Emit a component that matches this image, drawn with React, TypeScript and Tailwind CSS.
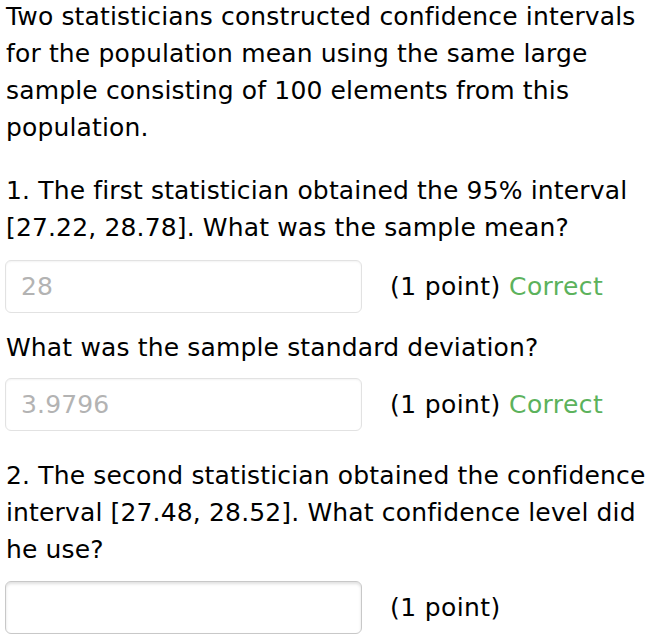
import React from "react";

function Row({ value, correct, dark }: { value?: string; correct?: boolean; dark?: boolean }) {
  return (
    <div className="flex items-center">
      <div
        className={
          "w-[357px] h-[53px] shrink-0 rounded-[6px] border flex items-center pl-[15px] text-[25px] text-[#b3b3b3] bg-white " +
          (dark ? "border-[#c8c8c8] shadow-[inset_0_2px_3px_rgba(0,0,0,0.12)]" : "border-[#e2e2e2] shadow-[inset_0_1px_2px_rgba(0,0,0,0.05)]")
        }
      >
        {value}
      </div>
      <div className="ml-[28px] text-[25px] tracking-[0.4px] text-black whitespace-nowrap">
        (1 point){correct ? <span className="text-[#5cb25c]"> Correct</span> : null}
      </div>
    </div>
  );
}

export default function App() {
  return (
    <div
      className="w-[650px] h-[639px] bg-white overflow-hidden pl-[6px] text-black"
      style={{ fontFamily: '"DejaVu Sans", Verdana, sans-serif' }}
    >
      <div className="text-[25px] leading-[37px] tracking-[0.15px] -mt-[2px]">
        <p>Two statisticians constructed confidence intervals for the population mean using the same large sample consisting of 100 elements from this population.</p>
        <p className="mt-[26px]">1. The first statistician obtained the 95% interval [27.22, 28.78]. What was the sample mean?</p>
        <div className="mt-[14px] -ml-[1px]">
          <Row value="28" correct />
        </div>
        <p className="mt-[16px]">What was the sample standard deviation?</p>
        <div className="mt-[12px] -ml-[1px]">
          <Row value="3.9796" correct />
        </div>
        <p className="mt-[26px]">2. The second statistician obtained the confidence interval [27.48, 28.52]. What confidence level did he use?</p>
        <div className="mt-[13px] -ml-[1px]">
          <Row dark />
        </div>
      </div>
    </div>
  );
}
